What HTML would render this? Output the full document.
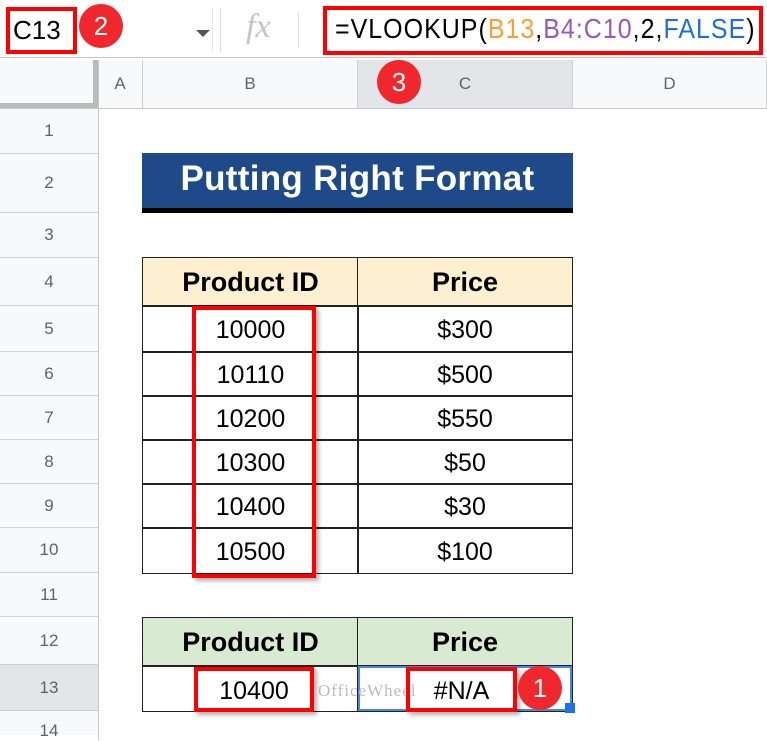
<!DOCTYPE html>
<html><head><style>
*{margin:0;padding:0;box-sizing:border-box}
body{width:767px;height:735px;background:#fff;position:relative;overflow:hidden;font-family:"Liberation Sans",Arial,sans-serif}
.a{position:absolute}
.rn{position:absolute;left:0;width:98px;text-align:center;color:#5f6368;font-size:17px;border-bottom:1px solid #d0d0d0;display:flex;align-items:center;justify-content:center;background:#f8f9fa}
.ch{position:absolute;top:60px;height:48px;display:flex;align-items:center;justify-content:center;color:#5f6368;font-size:17px;border-right:1px solid #d0d0d0;background:#f8f9fa}
.c{position:absolute;border:1.5px solid #222;display:flex;align-items:center;justify-content:center;font-size:25px;color:#000;padding-top:3px}
.h{font-weight:bold;font-size:27px;padding-top:0}
.red{position:absolute;border:4px solid #f00;box-shadow:3px 3px 4px rgba(0,0,0,.3)}
.bad{position:absolute;width:44px;height:44px;border-radius:50%;background:#f0282d;color:#fff;font-size:26px;display:flex;align-items:center;justify-content:center}
</style></head><body>
<div class="a" style="left:0;top:0;width:767px;height:58px;border-bottom:1px solid #c8c8c8"></div>
<div class="a" style="left:220px;top:8px;width:1px;height:44px;background:#ddd"></div>
<div class="a" style="left:212px;top:8px;width:1px;height:44px;background:#e6e6e6"></div>
<div class="a" style="left:196px;top:30px;width:0;height:0;border-left:7px solid transparent;border-right:7px solid transparent;border-top:7px solid #555"></div>
<div class="a" style="left:246px;top:8px;font-family:'Liberation Serif',serif;font-style:italic;font-size:34px;color:#c4c4c4">fx</div>
<div class="a" style="left:298px;top:12px;width:1px;height:36px;background:#ddd"></div>
<div class="red" style="left:6px;top:7px;width:71px;height:47px;box-shadow:none"></div>
<div class="a" style="left:13px;top:15px;font-size:26px;color:#000">C13</div>
<div class="bad" style="left:79px;top:4px">2</div>
<div class="red" style="left:323px;top:6px;width:440px;height:49px;box-shadow:none"></div>
<div class="a" style="left:335px;top:14px;font-family:'Liberation Sans',sans-serif;font-size:25px;letter-spacing:1px;color:#000;white-space:nowrap;transform:scaleY(1.1);transform-origin:top left">=VLOOKUP(<span style="color:#f6a035">B13</span>,<span style="color:#9b59b6">B4:C10</span>,2,<span style="color:#1e6fd9">FALSE</span>)</div>
<div class="a" style="left:0;top:60px;width:98px;height:48px;background:#f8f9fa;border-right:5px solid #bbb;border-bottom:5px solid #bbb"></div>
<div class="ch" style="left:98px;width:45px">A</div>
<div class="ch" style="left:143px;width:215px">B</div>
<div class="ch" style="left:358px;width:215px;background:#e3e5e9">C</div>
<div class="ch" style="left:573px;width:194px">D</div>
<div class="a" style="left:0;top:108px;width:767px;height:1px;background:#c8c8c8"></div>
<div class="a" style="left:98px;top:60px;width:1px;height:680px;background:#c8c8c8"></div>
<div class="rn" style="top:109px;height:45px">1</div>
<div class="rn" style="top:154px;height:59px">2</div>
<div class="rn" style="top:213px;height:45px">3</div>
<div class="rn" style="top:258px;height:48px">4</div>
<div class="rn" style="top:306px;height:46px">5</div>
<div class="rn" style="top:352px;height:44px">6</div>
<div class="rn" style="top:396px;height:44px">7</div>
<div class="rn" style="top:440px;height:44px">8</div>
<div class="rn" style="top:484px;height:44px">9</div>
<div class="rn" style="top:528px;height:45px">10</div>
<div class="rn" style="top:573px;height:44px">11</div>
<div class="rn" style="top:617px;height:48px">12</div>
<div class="rn" style="top:665px;height:46px;background:#e3e5e9">13</div>
<div class="rn" style="top:711px;height:24px;align-items:flex-start;padding-top:10px;border-bottom:none">14</div>
<div class="a" style="left:142px;top:153px;width:431px;height:60px;background:#1f4a8a;border-bottom:5px solid #000;color:#fff;font-weight:bold;font-size:35px;display:flex;align-items:center;justify-content:center;padding-bottom:3px;letter-spacing:0.3px">Putting Right Format</div>
<div class="c h" style="left:142px;top:257px;width:217px;height:50px;background:#fdf0d0">Product ID</div>
<div class="c h" style="left:357px;top:257px;width:216px;height:50px;background:#fdf0d0">Price</div>
<div class="c" style="left:142px;top:305px;width:217px;height:48px">10000</div><div class="c" style="left:357px;top:305px;width:216px;height:48px">$300</div>
<div class="c" style="left:142px;top:351px;width:217px;height:46px">10110</div><div class="c" style="left:357px;top:351px;width:216px;height:46px">$500</div>
<div class="c" style="left:142px;top:395px;width:217px;height:46px">10200</div><div class="c" style="left:357px;top:395px;width:216px;height:46px">$550</div>
<div class="c" style="left:142px;top:439px;width:217px;height:46px">10300</div><div class="c" style="left:357px;top:439px;width:216px;height:46px">$50</div>
<div class="c" style="left:142px;top:483px;width:217px;height:46px">10400</div><div class="c" style="left:357px;top:483px;width:216px;height:46px">$30</div>
<div class="c" style="left:142px;top:527px;width:217px;height:47px">10500</div><div class="c" style="left:357px;top:527px;width:216px;height:47px">$100</div>
<div class="red" style="left:192px;top:306px;width:124px;height:272px"></div>
<div class="c h" style="left:142px;top:617px;width:217px;height:50px;background:#d9ead3">Product ID</div>
<div class="c h" style="left:357px;top:617px;width:216px;height:50px;background:#d9ead3">Price</div>
<div class="c" style="left:142px;top:665px;width:217px;height:47px"></div>
<div class="c" style="left:357px;top:665px;width:216px;height:47px;border-color:#222"></div>
<div class="a" style="left:358px;top:666px;width:214px;height:45px;border:2px solid #4a86e8"></div>
<div class="a" style="left:565px;top:703px;width:10px;height:10px;background:#1a73e8"></div>
<div class="red" style="left:194px;top:667px;width:120px;height:45px;display:flex;align-items:center;justify-content:center;font-size:25px;padding-top:3px">10400</div>
<div class="a" style="left:318px;top:681px;font-family:'Liberation Serif',serif;font-size:17px;color:#bbb;letter-spacing:1px">OfficeWheel</div>
<div class="red" style="left:406px;top:667px;width:111px;height:45px;display:flex;align-items:center;justify-content:center;font-size:25px;padding-top:3px">#N/A</div>
<div class="bad" style="left:518px;top:666px">1</div>
<div class="bad" style="left:377px;top:60px">3</div>
</body></html>
